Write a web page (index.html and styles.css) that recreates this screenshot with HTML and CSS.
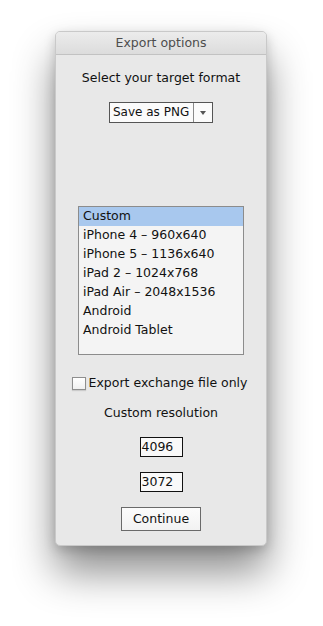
FILE: index.html
```html
<!DOCTYPE html>
<html>
<head>
<meta charset="utf-8">
<link rel="stylesheet" href="styles.css">
</head>
<body>
<div class="window">
  <div class="titlebar">Export options</div>
  <div class="content">
    <div class="label heading">Select your target format</div>
    <div class="select">
      <span class="select-text">Save as PNG</span>
      <span class="select-arrow"><span class="tri"></span></span>
    </div>
    <ul class="listbox">
      <li class="item selected">Custom</li>
      <li class="item">iPhone 4 – 960x640</li>
      <li class="item">iPhone 5 – 1136x640</li>
      <li class="item">iPad 2 – 1024x768</li>
      <li class="item">iPad Air – 2048x1536</li>
      <li class="item">Android</li>
      <li class="item">Android Tablet</li>
    </ul>
    <label class="check-row"><span class="checkbox"></span><span>Export exchange file only</span></label>
    <div class="label resolution">Custom resolution</div>
    <div class="field first">4096</div>
    <div class="field second">3072</div>
    <div class="button">Continue</div>
  </div>
</div>
</body>
</html>
```
FILE: styles.css
```css
html, body {
  margin: 0;
  padding: 0;
  background: #ffffff;
}
html { height: 100%; }
body {
  font-family: "DejaVu Sans", "Liberation Sans", sans-serif;
  font-size: 12px;
  color: #111;
  padding-top: 31px;
  padding-left: 55px;
  min-height: 626px;
  box-sizing: border-box;
}
.window {
  width: 212px;
  height: 515px;
  box-sizing: border-box;
  background: #e8e8e8;
  border-radius: 5px;
  border: 1px solid #c9c9c9;
  box-shadow: 0 26px 42px rgba(0,0,0,0.45), 0 4px 12px rgba(0,0,0,0.18);
  display: flex;
  flex-direction: column;
}
.titlebar {
  height: 22px;
  line-height: 22px;
  text-align: center;
  color: #4d4d4d;
  font-size: 12.5px;
  background: linear-gradient(#ececec, #dcdcdc);
  border-bottom: 1px solid #c2c2c2;
  border-radius: 4px 4px 0 0;
}
.content {
  display: flex;
  flex-direction: column;
  align-items: center;
}
.label {
  line-height: 16px;
  height: 16px;
}
.heading { margin-top: 15px; font-size: 12.5px; }
.select {
  margin-top: 16px;
  height: 21px;
  width: 104px;
  box-sizing: border-box;
  border: 1px solid #555;
  background: #fbfbfb;
  display: flex;
}
.select-text {
  flex: 1;
  line-height: 19px;
  padding-left: 3px;
  font-size: 12px;
}
.select-arrow {
  width: 18px;
  border-left: 1px solid #8a8a8a;
  display: flex;
  align-items: center;
  justify-content: center;
}
.tri {
  width: 0;
  height: 0;
  border-left: 3.5px solid transparent;
  border-right: 3.5px solid transparent;
  border-top: 4px solid #555;
}
.listbox {
  list-style: none;
  margin: 83px 0 0 0;
  padding: 0;
  width: 166px;
  height: 149px;
  box-sizing: border-box;
  border: 1px solid #8c8c8c;
  background: #f4f4f4;
}
.item {
  height: 19px;
  line-height: 18px;
  padding-left: 4px;
  font-size: 12.5px;
}
.item.selected {
  background: #a8c8ee;
}
.check-row {
  margin-top: 20px;
  height: 16px;
  line-height: 16px;
  display: flex;
  align-items: center;
  gap: 3px;
  font-size: 12.5px;
  margin-left: -3px;
}
.checkbox {
  width: 12px;
  height: 11px;
  border: 1px solid #8e8e8e;
  background: linear-gradient(#ffffff, #f0f0f0);
  box-shadow: 0 1px 1px rgba(0,0,0,0.12);
}
.resolution { margin-top: 14px; font-size: 12.5px; }
.field {
  width: 43px;
  height: 20px;
  box-sizing: border-box;
  border: 1px solid #111;
  background: #f9f9f9;
  line-height: 18px;
  padding-left: 1px;
  font-size: 12.5px;
}
.field.first { margin-top: 16px; }
.field.second { margin-top: 15px; }
.button {
  margin-top: 15px;
  width: 80px;
  height: 24px;
  box-sizing: border-box;
  border: 1px solid #6a6a6a;
  background: linear-gradient(#fcfcfc, #f2f2f2);
  text-align: center;
  line-height: 22px;
  font-size: 12.5px;
}
```
